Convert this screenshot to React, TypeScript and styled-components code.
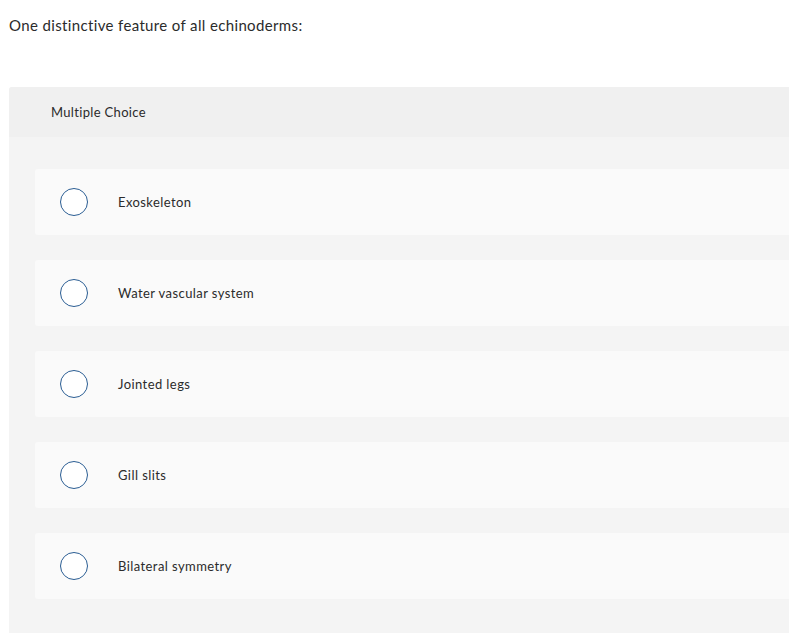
import React from 'react';
import styled, { createGlobalStyle } from 'styled-components';

const GlobalStyle = createGlobalStyle`
  html, body {
    margin: 0;
    padding: 0;
    background: #ffffff;
    overflow: hidden;
  }
  body {
    font-family: Lato, "Open Sans", "Liberation Sans", sans-serif;
    color: #2d2d2d;
  }
`;

const Page = styled.div`
  padding: 0 0 0 9px;
`;

const Question = styled.p`
  margin: 0;
  padding: 15px 0 0 0;
  height: 72px;
  font-size: 15px;
  line-height: 20px;
  letter-spacing: 0.36px;
  color: #2b2b2b;
`;

const Panel = styled.section`
  background: #f4f4f4;
  border-radius: 3px 0 0 0;
`;

const PanelHeader = styled.div`
  display: flex;
  align-items: center;
  height: 50px;
  padding-left: 42px;
  background: #f0f0f0;
  border-radius: 3px 0 0 0;
  font-size: 13px;
  letter-spacing: 0.33px;
  color: #2b2b2b;
`;

const Options = styled.div`
  display: flex;
  flex-direction: column;
  gap: 25px;
  padding: 32px 0 34px 26px;
`;

const Option = styled.label`
  display: flex;
  align-items: center;
  gap: 30px;
  height: 66px;
  padding-left: 25px;
  background: #fafafa;
  border-radius: 3px 0 0 3px;
  font-size: 13px;
  letter-spacing: 0.42px;
  color: #2b2b2b;
  cursor: pointer;
`;

const Radio = styled.span`
  box-sizing: border-box;
  width: 28px;
  height: 28px;
  flex: none;
  border: 1.5px solid #2a5d93;
  border-radius: 50%;
  background: #ffffff;
`;

const choices = [
  'Exoskeleton',
  'Water vascular system',
  'Jointed legs',
  'Gill slits',
  'Bilateral symmetry',
];

export default function App() {
  return (
    <>
      <GlobalStyle />
      <Page>
        <Question>One distinctive feature of all echinoderms:</Question>
        <Panel>
          <PanelHeader>Multiple Choice</PanelHeader>
          <Options>
            {choices.map((c) => (
              <Option key={c}>
                <Radio />
                <span>{c}</span>
              </Option>
            ))}
          </Options>
        </Panel>
      </Page>
    </>
  );
}
